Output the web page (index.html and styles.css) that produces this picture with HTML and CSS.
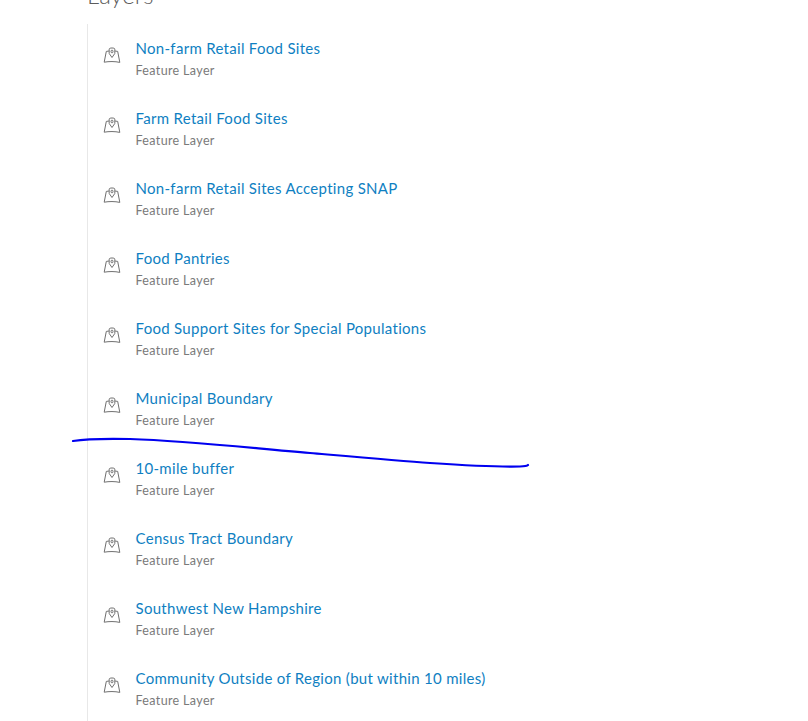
FILE: index.html
```html
<!DOCTYPE html>
<html lang="en">
<head>
  <meta charset="UTF-8" />
  <title>Layers</title>
  <link rel="stylesheet" href="styles.css">
</head>
<body>
  <svg class="icon-defs" width="0" height="0">
    <symbol id="layer-glyph" viewBox="0 0 18 18">
      <path d="M6 5 3.300 5.400 1.200 16.200C6 15.300 12 15.300 16.800 16.400L14.700 5.400 12 5"/>
      <path d="M6.200 3.200C6.200 2.300 7.300 2 9 2s2.800.3 2.800 1.200v4.300L9 11.500 6.200 7.500Z"/>
      <ellipse cx="9" cy="5.500" rx="1" ry="1.400"/>
    </symbol>
  </svg>

  <div class="content">
    <h2 class="section-title">Layers</h2>
    <ul class="layer-list">
      <li class="layer-item">
        <svg class="layer-icon"><use href="#layer-glyph"/></svg>
        <div class="layer-text">
          <a class="layer-name" href="#">Non-farm Retail Food Sites</a>
          <span class="layer-type">Feature Layer</span>
        </div>
      </li>
      <li class="layer-item">
        <svg class="layer-icon"><use href="#layer-glyph"/></svg>
        <div class="layer-text">
          <a class="layer-name" href="#">Farm Retail Food Sites</a>
          <span class="layer-type">Feature Layer</span>
        </div>
      </li>
      <li class="layer-item">
        <svg class="layer-icon"><use href="#layer-glyph"/></svg>
        <div class="layer-text">
          <a class="layer-name" href="#">Non-farm Retail Sites Accepting SNAP</a>
          <span class="layer-type">Feature Layer</span>
        </div>
      </li>
      <li class="layer-item">
        <svg class="layer-icon"><use href="#layer-glyph"/></svg>
        <div class="layer-text">
          <a class="layer-name" href="#">Food Pantries</a>
          <span class="layer-type">Feature Layer</span>
        </div>
      </li>
      <li class="layer-item">
        <svg class="layer-icon"><use href="#layer-glyph"/></svg>
        <div class="layer-text">
          <a class="layer-name" href="#">Food Support Sites for Special Populations</a>
          <span class="layer-type">Feature Layer</span>
        </div>
      </li>
      <li class="layer-item">
        <svg class="layer-icon"><use href="#layer-glyph"/></svg>
        <div class="layer-text">
          <a class="layer-name" href="#">Municipal Boundary</a>
          <span class="layer-type">Feature Layer</span>
        </div>
      </li>
      <li class="layer-item">
        <svg class="layer-icon"><use href="#layer-glyph"/></svg>
        <div class="layer-text">
          <a class="layer-name" href="#">10-mile buffer</a>
          <span class="layer-type">Feature Layer</span>
        </div>
      </li>
      <li class="layer-item">
        <svg class="layer-icon"><use href="#layer-glyph"/></svg>
        <div class="layer-text">
          <a class="layer-name" href="#">Census Tract Boundary</a>
          <span class="layer-type">Feature Layer</span>
        </div>
      </li>
      <li class="layer-item">
        <svg class="layer-icon"><use href="#layer-glyph"/></svg>
        <div class="layer-text">
          <a class="layer-name" href="#">Southwest New Hampshire</a>
          <span class="layer-type">Feature Layer</span>
        </div>
      </li>
      <li class="layer-item">
        <svg class="layer-icon"><use href="#layer-glyph"/></svg>
        <div class="layer-text">
          <a class="layer-name" href="#">Community Outside of Region (but within 10 miles)</a>
          <span class="layer-type">Feature Layer</span>
        </div>
      </li>
    </ul>
  </div>

  <!-- hand drawn annotation on top of the list -->
  <svg class="pen-mark" width="808" height="721" viewBox="0 0 808 721">
    <path d="M73 441C85 439 105 438.500 130 439C190 441 250 448 310 453C350 456.500 400 461 430 463C460 465 500 467 520 466.500C525 466.300 527 466 528 465"/>
  </svg>
</body>
</html>
```

FILE: styles.css
```css
html, body {
  height: 100%;
}
body {
  margin: 0;
  background: #fff;
  font-family: "Lato", "Noto Sans", sans-serif;
  overflow: hidden;
  position: relative;
}
.icon-defs {
  position: absolute;
}
.content {
  margin-top: -20px;
  padding-left: 87px;
}
.section-title {
  margin: 0 0 15px;
  font-size: 24px;
  line-height: 29px;
  font-weight: 300;
  color: #5c5c5c;
}
.layer-list {
  list-style: none;
  margin: 0;
  padding: 0;
  border-left: 1px solid #e8e8e8;
}
.layer-item {
  display: flex;
  align-items: flex-start;
  height: 70px;
  padding: 14px 0 0 15px;
  box-sizing: border-box;
}
.layer-icon {
  width: 18px;
  height: 18px;
  margin-top: 8px;
  flex-shrink: 0;
  fill: none;
  stroke: #707070;
  stroke-width: 1;
}
.layer-text {
  margin-left: 14.500px;
  display: flex;
  flex-direction: column;
}
.layer-name {
  font-size: 15px;
  line-height: 20px;
  letter-spacing: 0.3px;
  color: #0f7fc2;
  text-decoration: none;
}
.layer-type {
  margin-top: 5px;
  font-size: 12.500px;
  line-height: 16px;
  letter-spacing: 0.35px;
  color: #7a7a7a;
}
.pen-mark {
  position: absolute;
  top: 0;
  left: 0;
  pointer-events: none;
}
.pen-mark path {
  fill: none;
  stroke: #0000f0;
  stroke-width: 2.200;
  stroke-linecap: round;
}
```
